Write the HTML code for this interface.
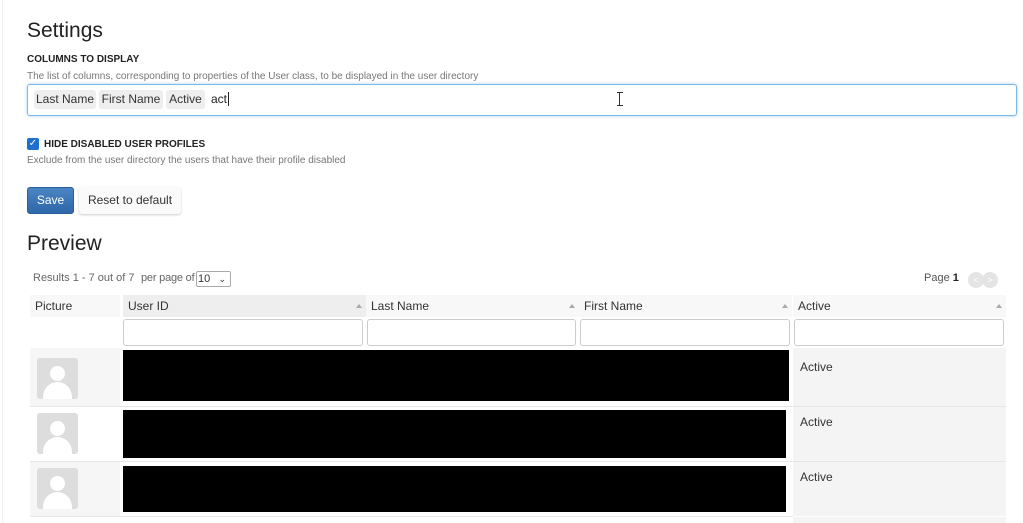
<!DOCTYPE html>
<html><head><meta charset="utf-8"><style>
*{box-sizing:border-box;margin:0;padding:0}
body{width:1023px;height:523px;overflow:hidden;background:#fff;font-family:"Liberation Sans",Arial,sans-serif;color:#333;position:relative}
.a{position:absolute}
.pill{position:absolute;top:90px;height:19px;background:#eee;border-radius:3px;font-size:12px;line-height:19px;text-align:center;color:#333}
.th{position:absolute;top:295px;height:22px;font-size:12px;line-height:22px;padding-left:5px;background:#f8f8f8}
.tri{position:absolute;right:4px;top:9px;width:0;height:0;border-left:3px solid transparent;border-right:3px solid transparent;border-bottom:4px solid #aaa}
.inp{position:absolute;top:319px;height:27px;border:1px solid #ccc;border-radius:3px;background:#fff}
.av{position:absolute;left:37px;width:41px;height:41px;background:#ddd;border-radius:3px;overflow:hidden}
.av .h{position:absolute;left:13px;top:8px;width:15px;height:15px;border-radius:50%;background:#fff}
.av .b{position:absolute;left:6px;top:24px;width:29px;height:30px;border-radius:50% 50% 0 0;background:#fff}
.blk{position:absolute;left:123px;background:#000}
.act{position:absolute;left:793px;width:213px;background:#f4f4f4;font-size:12px;padding:12px 0 0 7px}
</style></head><body>
<div class="a" style="left:2px;top:0;width:1px;height:523px;background:#f0f0f0"></div>
<div class="a" style="left:27px;top:19px;font-size:21px;color:#222">Settings</div>
<div class="a" style="left:27px;top:54px;font-size:10px;font-weight:bold;color:#222">COLUMNS TO DISPLAY</div>
<div class="a" style="left:27px;top:71px;font-size:10px;color:#777">The list of columns, corresponding to properties of the User class, to be displayed in the user directory</div>
<div class="a" style="left:27px;top:84px;width:990px;height:32px;border:1px solid #7cb8ea;border-radius:3px;box-shadow:0 0 3px #a8d0f0"></div>
<div class="pill" style="left:34px;width:62px">Last Name</div>
<div class="pill" style="left:99px;width:64px">First Name</div>
<div class="pill" style="left:166px;width:39px">Active</div>
<div class="a" style="left:211px;top:92px;font-size:12px;color:#222">act<span style="border-left:1px solid #222;margin-left:1px"></span></div>
<div class="a" style="left:617px;top:92px;width:6px;height:14px;border-top:1px solid #333;border-bottom:1px solid #333"><div style="position:absolute;left:2px;top:0;width:1px;height:12px;background:#333"></div></div>
<div class="a" style="left:27px;top:138px;width:12px;height:12px;background:#1f6fd0;border-radius:2px;color:#fff;font-size:10px;line-height:12px;text-align:center">✓</div>
<div class="a" style="left:44px;top:139px;font-size:10px;font-weight:bold;color:#222">HIDE DISABLED USER PROFILES</div>
<div class="a" style="left:27px;top:155px;font-size:10px;color:#777">Exclude from the user directory the users that have their profile disabled</div>
<div class="a" style="left:27px;top:187px;width:47px;height:27px;background:linear-gradient(#4a85c4,#2f67a8);border:1px solid #2a5d99;border-radius:3px;color:#fff;font-size:12px;line-height:25px;text-align:center">Save</div>
<div class="a" style="left:79px;top:187px;width:102px;height:27px;background:#fafafa;border-radius:3px;box-shadow:0 1px 2px #ccc;font-size:12px;line-height:27px;text-align:center;color:#333">Reset to default</div>
<div class="a" style="left:27px;top:232px;font-size:21px;color:#222">Preview</div>
<div class="a" style="left:33px;top:272px;font-size:11px;color:#666">Results 1 - 7 out of 7</div>
<div class="a" style="left:141px;top:272px;font-size:11px;color:#666;letter-spacing:-0.2px">per page of</div>
<div class="a" style="left:196px;top:271px;width:35px;height:16px;border:1px solid #aaa;border-radius:2px;font-size:11px;line-height:14px;padding-left:1px">10 <span style="position:absolute;right:4px;top:0;font-size:9px">⌄</span></div>
<div class="a" style="left:924px;top:272px;font-size:11px;color:#555">Page <b style="color:#222">1</b></div>
<div class="a" style="left:968px;top:272px;width:16px;height:16px;border-radius:50%;background:#e4e4e4;color:#fff;font-size:9px;line-height:16px;text-align:center">&lt;</div>
<div class="a" style="left:982px;top:272px;width:16px;height:16px;border-radius:50%;background:#e4e4e4;color:#fff;font-size:9px;line-height:16px;text-align:center">&gt;</div>
<div class="th" style="left:30px;width:90px">Picture</div>
<div class="th" style="left:123px;width:243px;background:#eee">User ID<div class="tri"></div></div>
<div class="th" style="left:366px;width:213px">Last Name<div class="tri"></div></div>
<div class="th" style="left:579px;width:213px">First Name<div class="tri"></div></div>
<div class="th" style="left:793px;width:213px">Active<div class="tri"></div></div>
<div class="inp" style="left:123px;width:240px"></div>
<div class="inp" style="left:367px;width:209px"></div>
<div class="inp" style="left:580px;width:210px"></div>
<div class="inp" style="left:794px;width:210px"></div>
<div class="a" style="left:30px;top:348px;width:90px;height:58px;background:#f6f6f6"></div>
<div class="a" style="left:30px;top:406px;width:763px;height:1px;background:#e6e6e6"></div>
<div class="a" style="left:30px;top:461px;width:763px;height:1px;background:#e6e6e6"></div>
<div class="a" style="left:30px;top:462px;width:90px;height:54px;background:#f6f6f6"></div>
<div class="a" style="left:30px;top:516px;width:763px;height:1px;background:#e6e6e6"></div>
<div class="av" style="top:358px"><div class="h"></div><div class="b"></div></div>
<div class="av" style="top:413px"><div class="h"></div><div class="b"></div></div>
<div class="av" style="top:468px"><div class="h"></div><div class="b"></div></div>
<div class="blk" style="top:350px;width:666px;height:51px"></div>
<div class="blk" style="top:410px;width:663px;height:48px"></div>
<div class="blk" style="top:466px;width:663px;height:46px"></div>
<div class="act" style="top:348px;height:58px">Active</div>
<div class="act" style="top:406px;height:55px;border-top:1px solid #e6e6e6;padding-top:8px">Active</div>
<div class="act" style="top:461px;height:55px;border-top:1px solid #e6e6e6;padding-top:8px">Active</div>
<div class="act" style="top:517px;height:6px;padding:0"></div>
</body></html>
